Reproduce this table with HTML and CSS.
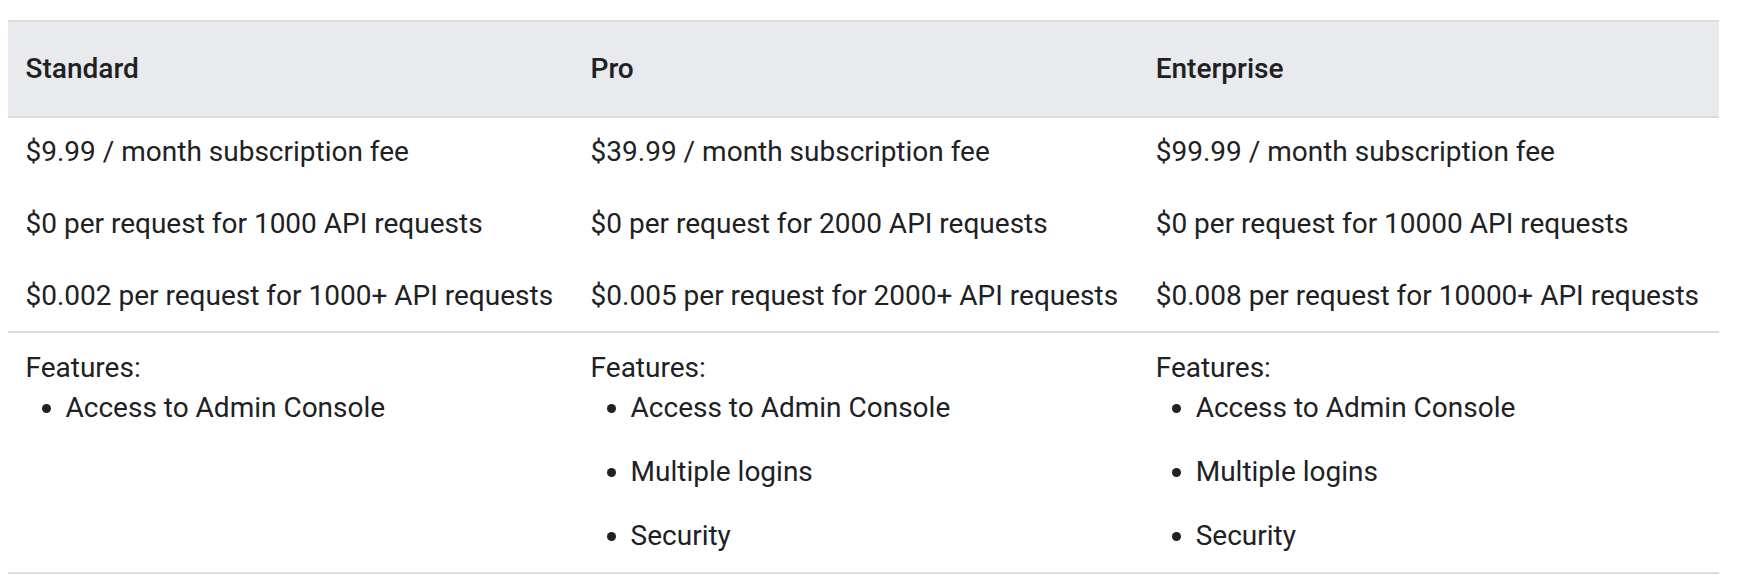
FILE: index.html
```html
<!DOCTYPE html>
<html lang="en">
<head>
<meta charset="utf-8">
<title>Pricing</title>
<link rel="stylesheet" href="styles.css">
</head>
<body>
<table class="pricing">
  <thead>
    <tr>
      <th>Standard</th>
      <th>Pro</th>
      <th>Enterprise</th>
    </tr>
  </thead>
  <tbody>
    <tr class="prices">
      <td>
        <p class="line">$9.99 / month subscription fee</p>
        <p class="line">$0 per request for 1000 API requests</p>
        <p class="line">$0.002 per request for 1000+ API requests</p>
      </td>
      <td>
        <p class="line">$39.99 / month subscription fee</p>
        <p class="line">$0 per request for 2000 API requests</p>
        <p class="line">$0.005 per request for 2000+ API requests</p>
      </td>
      <td>
        <p class="line">$99.99 / month subscription fee</p>
        <p class="line">$0 per request for 10000 API requests</p>
        <p class="line">$0.008 per request for 10000+ API requests</p>
      </td>
    </tr>
    <tr class="features">
      <td>
        <div class="label">Features:</div>
        <ul class="list">
          <li>Access to Admin Console</li>
        </ul>
      </td>
      <td>
        <div class="label">Features:</div>
        <ul class="list">
          <li>Access to Admin Console</li>
          <li>Multiple logins</li>
          <li>Security</li>
        </ul>
      </td>
      <td>
        <div class="label">Features:</div>
        <ul class="list">
          <li>Access to Admin Console</li>
          <li>Multiple logins</li>
          <li>Security</li>
        </ul>
      </td>
    </tr>
  </tbody>
</table>
</body>
</html>
```

FILE: styles.css
```css
html, body {
  background: #ffffff;
}

body {
  margin: 0;
  padding: 20px 8px 0 8px;
  font-family: Roboto, "Liberation Sans", Arial, sans-serif;
  font-size: 28px;
  color: #202124;
}

.pricing {
  border-collapse: collapse;
  border-top: 2px solid #dadce0;
  text-align: left;
}

.pricing th {
  background: #e8eaed;
  font-family: "Roboto Medium", Roboto, "Liberation Sans", Arial, sans-serif;
  font-weight: 500;
  line-height: 44px;
  padding: 25px 20px 25px 17.5px;
  border-bottom: 2px solid #dadce0;
  vertical-align: middle;
  white-space: nowrap;
}

.pricing td {
  vertical-align: top;
  padding: 12px 20px 13px 17.5px;
  border-bottom: 2px solid #dadce0;
  white-space: nowrap;
}

.line {
  margin: 0 0 28px 0;
  line-height: 44px;
}

.line:last-child {
  margin-bottom: 0;
}

.features td {
  padding-top: 15px;
  padding-bottom: 16px;
}

.label {
  line-height: 40px;
}

.list {
  margin: 0;
  padding-left: 40px;
  line-height: 40px;
}

.list li + li {
  margin-top: 24px;
}
```
